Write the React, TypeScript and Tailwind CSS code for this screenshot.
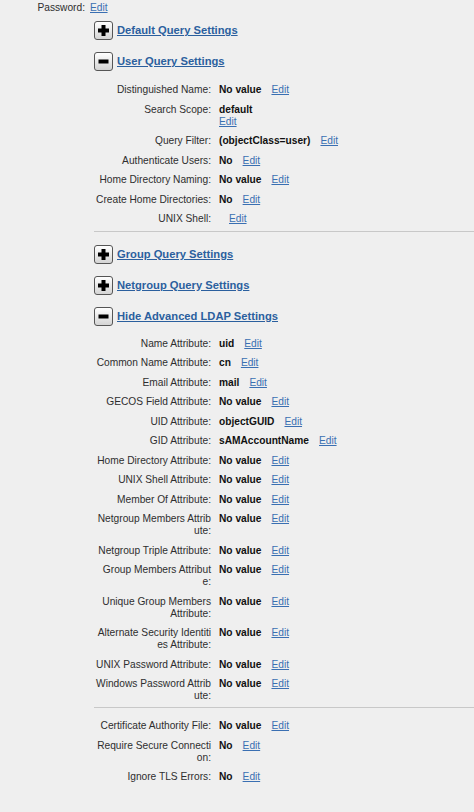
import React from "react";

type Row = {
    label: string[];
    value?: string;
    editBelow?: boolean;
};

const userRows: Row[] = [
    { label: ["Distinguished Name:"], value: "No value" },
    { label: ["Search Scope:"], value: "default", editBelow: true },
    { label: ["Query Filter:"], value: "(objectClass=user)" },
    { label: ["Authenticate Users:"], value: "No" },
    { label: ["Home Directory Naming:"], value: "No value" },
    { label: ["Create Home Directories:"], value: "No" },
    { label: ["UNIX Shell:"], value: "" },
];

const advancedRows: Row[] = [
    { label: ["Name Attribute:"], value: "uid" },
    { label: ["Common Name Attribute:"], value: "cn" },
    { label: ["Email Attribute:"], value: "mail" },
    { label: ["GECOS Field Attribute:"], value: "No value" },
    { label: ["UID Attribute:"], value: "objectGUID" },
    { label: ["GID Attribute:"], value: "sAMAccountName" },
    { label: ["Home Directory Attribute:"], value: "No value" },
    { label: ["UNIX Shell Attribute:"], value: "No value" },
    { label: ["Member Of Attribute:"], value: "No value" },
    { label: ["Netgroup Members Attrib", "ute:"], value: "No value" },
    { label: ["Netgroup Triple Attribute:"], value: "No value" },
    { label: ["Group Members Attribut", "e:"], value: "No value" },
    { label: ["Unique Group Members", "Attribute:"], value: "No value" },
    { label: ["Alternate Security Identiti", "es Attribute:"], value: "No value" },
    { label: ["UNIX Password Attribute:"], value: "No value" },
    { label: ["Windows Password Attrib", "ute:"], value: "No value" },
];

const tlsRows: Row[] = [
    { label: ["Certificate Authority File:"], value: "No value" },
    { label: ["Require Secure Connecti", "on:"], value: "No" },
    { label: ["Ignore TLS Errors:"], value: "No" },
];

const EditLink = () => (
    <a href="#" className="text-[#3a6fb2] underline">Edit</a>
);

const ToggleIcon = ({ open }: { open: boolean }) => (
    <span className="flex h-[19px] w-[19px] items-center justify-center rounded-[3px] border border-[#555] bg-gradient-to-b from-white to-[#d4d4d4]">
        <svg width="13" height="13" viewBox="0 0 13 13">
            {open ? (
                <rect x="1.5" y="4.5" width="10" height="4" fill="#000" />
            ) : (
                <path d="M4.5 1h4v3.5h3.5v4h-3.5v3.5h-4v-3.5h-3.5v-4h3.5z" fill="#000" />
            )}
        </svg>
    </span>
);

const SectionHeader = ({ title, open }: { title: string; open: boolean }) => (
    <div className="flex h-[31px] items-center gap-[4px]">
        <ToggleIcon open={open} />
        <a href="#" className="text-[11.2px] font-bold text-[#2b5f9e] underline">{title}</a>
    </div>
);

const SettingRow = ({ row }: { row: Row }) => (
    <div className="flex py-[3.75px] leading-[12px]">
        <div className="w-[117px] shrink-0 text-right text-[#2e2e2e]">
            {row.label.map((l) => (
                <div key={l} className="whitespace-nowrap">{l}</div>
            ))}
        </div>
        {row.editBelow ? (
            <div className="ml-[8px] flex flex-col">
                <span className="font-bold text-[#111]">{row.value}</span>
                <EditLink />
            </div>
        ) : (
            <div className="ml-[8px] flex gap-[10px] whitespace-nowrap">
                <span className="font-bold text-[#111]">{row.value}</span>
                <EditLink />
            </div>
        )}
    </div>
);

const Divider = ({ className }: { className: string }) => (
    <div className={`h-[2px] border-t border-[#c8c8c8] ${className}`} />
);

export default function App() {
    return (
        <div
            className="min-h-screen w-full bg-[#efefef] text-[10.2px] text-[#2e2e2e]"
            style={{ fontFamily: '"Liberation Sans", Arial, sans-serif' }}
        >
            <div className="flex h-[15px] items-center pt-[1px] leading-[12px]">
                <span className="w-[85px] text-right">Password:</span>
                <span className="ml-[5px]"><EditLink /></span>
            </div>

            <div className="ml-[94px]">
                <SectionHeader title="Default Query Settings" open={false} />
                <SectionHeader title="User Query Settings" open={true} />

                <div className="mt-[3.5px]">
                    {userRows.map((r) => (
                        <SettingRow key={r.label.join("")} row={r} />
                    ))}
                </div>

                <Divider className="mt-[2px]" />

                <div className="mt-[5.5px]">
                    <SectionHeader title="Group Query Settings" open={false} />
                    <SectionHeader title="Netgroup Query Settings" open={false} />
                    <SectionHeader title="Hide Advanced LDAP Settings" open={true} />
                </div>

                <div className="mt-[2.5px]">
                    {advancedRows.map((r) => (
                        <SettingRow key={r.label.join("")} row={r} />
                    ))}
                </div>

                <Divider className="mt-[0.5px]" />

                <div className="mt-[8px] pb-[20px]">
                    {tlsRows.map((r) => (
                        <SettingRow key={r.label.join("")} row={r} />
                    ))}
                </div>
            </div>
        </div>
    );
}
